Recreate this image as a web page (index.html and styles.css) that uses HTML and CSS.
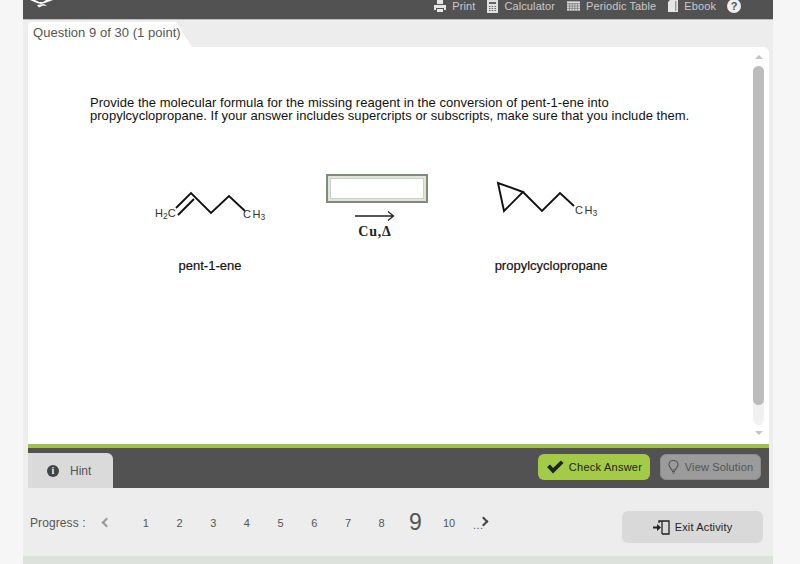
FILE: index.html
```html
<!DOCTYPE html>
<html>
  <head>
    <meta name="viewport" content="width=device-width, initial-scale=1.0">
    <link rel="stylesheet" href="styles.css">
  </head>
  <body>
    <div class="page">
      <div class="topbar">
        <svg class="logo" width="24" height="8" viewBox="0 0 24 8">
          <path d="M0 0 L7 3 L11 4 L15 3 L23 0 L16 0 L13 2 L9 2 L5 0 Z M7 5 L14 4 L17 6 L13 5.500 L9 7.500 Z" fill="#fff"/>
        </svg>
        <div class="tools">
          <a class="tool">
            <svg width="12" height="12" viewBox="0 0 12 12"><path d="M3 0h6v4H3z M0 5h12v5h-2V8H2v2H0z M3 9h6v3H3z" fill="#e6e6e6"/></svg>
            Print
          </a>
          <a class="tool">
            <svg width="11" height="13" viewBox="0 0 11 13"><path d="M0 0h11v13H0z" fill="#e0e0e0"/><path d="M2 2h7v2H2z M2 6h1.500v1H2z M4.700 6h1.500v1H4.700z M7.500 6H9v1H7.500z M2 8h1.500v1H2z M4.700 8h1.500v1H4.700z M7.500 8H9v1H7.500z M2 10h1.500v1H2z M4.700 10h1.500v1H4.700z M7.500 10H9v1H7.500z" fill="#666"/></svg>
            Calculator
          </a>
          <a class="tool">
            <svg width="13" height="10" viewBox="0 0 14 10"><path d="M0 0h14v10H0z" fill="#ddd"/><path d="M0 2.500h14 M0 5h14 M0 7.500h14 M2.800 2v8 M5.600 2v8 M8.400 2v8 M11.200 2v8" stroke="#666" stroke-width="0.700"/></svg>
            Periodic Table
          </a>
          <a class="tool tool-ebook">
            <svg width="10" height="12" viewBox="0 0 10 12"><path d="M0 2 L2 0 H10 V12 H0 Z" fill="#e6e6e6"/><path d="M7.800 1v10" stroke="#777"/></svg>
            Ebook
          </a>
          <span class="help">?</span>
        </div>
      </div>

      <div class="tabrow">
        <div class="tab">Question 9 of 30 (1 point)</div>
      </div>

      <div class="card">
        <div class="content">
          <p class="prompt">Provide the molecular formula for the missing reagent in the conversion of pent-1-ene into propylcyclopropane. If your answer includes supercripts or subscripts, make sure that you include them.</p>
          <div class="scheme">
            <div class="molecule mol-left">
              <svg width="120" height="60" viewBox="0 0 120 60">
                <path d="M26 37 L41 22 L61 42 L79 25 L95 40" class="bond"/>
                <path d="M28 44 L44 28" class="bond"/>
                <text x="5" y="46" class="atom">H<tspan class="sub" dy="2">2</tspan><tspan dy="-2">C</tspan></text>
                <text x="93" y="47" class="atom atom-gap">C H<tspan class="sub" dy="2">3</tspan></text>
              </svg>
              <div class="caption">pent-1-ene</div>
            </div>
            <div class="reaction">
              <div class="answer-box"><input class="answer" type="text"></div>
              <svg class="arrow" width="40" height="12" viewBox="0 0 40 12">
                <path d="M0 6 H38 M33 1.500 L38.500 6 L33 10.500" fill="none" stroke="#222" stroke-width="1.300"/>
              </svg>
              <div class="conditions">Cu,&Delta;</div>
            </div>
            <div class="molecule mol-right">
              <svg width="120" height="60" viewBox="0 0 120 60">
                <path d="M18 12 L24 40 L43 21 Z M43 21 L62 40 L80 22 L94 35" class="bond"/>
                <text x="95" y="43" class="atom atom-gap">C H<tspan class="sub" dy="2">3</tspan></text>
              </svg>
              <div class="caption caption-wide">propylcyclopropane</div>
            </div>
          </div>
        </div>
        <div class="scrollbar">
          <span class="scroll-up"></span>
          <div class="scroll-track"><div class="scroll-thumb"></div></div>
          <span class="scroll-down"></span>
        </div>
      </div>

      <div class="actionbar">
        <div class="hint">
          <span class="hint-icon">i</span>
          Hint
        </div>
        <div class="actions">
          <button class="btn btn-check">
            <svg width="18" height="14" viewBox="0 0 18 14"><path d="M1 7 L4 4.500 L7 8 L15 0.500 L17.500 3 L7 13.500 Z" fill="#222"/></svg>
            Check Answer
          </button>
          <button class="btn btn-solution">
            <svg width="11" height="14" viewBox="0 0 11 14"><path d="M3.500 10 C3 7.500 1 7 1 4.700 A4.500 4.200 0 0 1 10 4.700 C10 7 8 7.500 7.500 10 Z M4 11.500h3 M4.500 13h2" fill="none" stroke="#555" stroke-width="1.200"/></svg>
            View Solution
          </button>
        </div>
      </div>

      <div class="progress">
        <span class="progress-label">Progress :</span>
        <span class="chev chev-prev"></span>
        <ol class="steps">
          <li>1</li>
          <li>2</li>
          <li>3</li>
          <li>4</li>
          <li>5</li>
          <li>6</li>
          <li>7</li>
          <li>8</li>
          <li class="current">9</li>
          <li>10</li>
        </ol>
        <span class="more">...</span>
        <span class="chev chev-next"></span>
        <button class="exit">
          <svg width="18" height="15" viewBox="0 0 18 15"><path d="M6 3V1h10v13H9 M9 1v13" fill="none" stroke="#222" stroke-width="1.300"/><path d="M0 6.500h4V4l4 3.500L4 11V8.500H0z" fill="#222"/></svg>
          Exit Activity
        </button>
      </div>

      <div class="footstrip"></div>
    </div>
  </body>
</html>
```

FILE: styles.css
```css
html, body {
  margin: 0;
  height: 564px;
  overflow: hidden;
}

body {
  background-color: #f6f6f6;
  font-family: "Liberation Sans", Arial, sans-serif;
  color: #444;
}

.page {
  width: 750px;
  height: 564px;
  margin-left: 23px;
  background-color: #ededed;
  display: flex;
  flex-direction: column;
}

/* Top bar */
.topbar {
  height: 19px;
  flex: none;
  background-color: #525252;
  border-bottom: 1px solid #bdbdbd;
  display: flex;
  justify-content: space-between;
  overflow: hidden;
}

.logo {
  margin-left: 7px;
}

.tools {
  display: flex;
  align-items: flex-start;
  gap: 12px;
  padding-right: 32px;
}

.tool {
  height: 12px;
  display: flex;
  align-items: center;
  gap: 6px;
  color: #c9c9c9;
  font-size: 11px;
  line-height: 11px;
  letter-spacing: 0.100px;
}

.help {
  width: 14px;
  height: 14px;
  margin-left: -1px;
  margin-top: -1px;
  border-radius: 50%;
  background-color: #eee;
  color: #525252;
  font-size: 11px;
  font-weight: bold;
  line-height: 14px;
  text-align: center;
}

/* Question tab */
.tabrow {
  height: 27px;
  flex: none;
  padding-left: 5px;
  display: flex;
  align-items: flex-end;
}

.tab {
  height: 25px;
  width: 159px;
  padding-left: 5px;
  background-color: #fff;
  border-radius: 4px 0 0 0;
  clip-path: polygon(0 0, 148px 0, 100% 100%, 0 100%);
  font-size: 13px;
  line-height: 22px;
  letter-spacing: 0.040px;
  color: #555;
}

/* Question card */
.card {
  height: 397px;
  flex: none;
  margin: 0 4px 0 5px;
  background-color: #fff;
  border-radius: 0 6px 0 0;
  display: flex;
}

.content {
  flex: 1;
  color: #111;
}

.prompt {
  margin: 49px 0 0 62px;
  width: 610px;
  font-size: 13px;
  line-height: 13px;
  letter-spacing: 0.030px;
}

.scheme {
  display: flex;
  margin-top: 52px;
}

.molecule {
  width: 120px;
  margin-top: -3px;
  display: flex;
  flex-direction: column;
}

.molecule svg {
  height: 60px;
}

.mol-left {
  margin-left: 122px;
}

.mol-right {
  margin-left: 52px;
}

.bond {
  fill: none;
  stroke: #111;
  stroke-width: 1.900;
}

.atom {
  font-family: "Liberation Sans", Arial, sans-serif;
  font-size: 11px;
  fill: #333;
}

.atom-gap {
  word-spacing: -1.500px;
}

.sub {
  font-size: 8.500px;
}

.caption {
  margin-top: 27px;
  font-size: 13px;
  line-height: 15px;
  text-align: center;
  -webkit-text-stroke: 0.200px #111;
}

.caption-wide {
  margin-left: -6px;
  margin-right: -28px;
}

.reaction {
  width: 102px;
  margin-left: 56px;
  display: flex;
  flex-direction: column;
  align-items: center;
}

.answer-box {
  width: 102px;
  height: 29px;
  box-sizing: border-box;
  border: 2px solid #7d8a7d;
  background-color: #e6e4d2;
  padding: 2px;
}

.answer {
  display: block;
  width: 100%;
  height: 100%;
  box-sizing: border-box;
  border: 1px solid #c4d0dc;
  background-color: #fff;
  padding: 0;
}

.arrow {
  margin: 7px 5px 0 0;
}

.conditions {
  margin: 2px 4px 0 0;
  font-family: "Liberation Serif", "Times New Roman", serif;
  font-size: 14px;
  font-weight: bold;
  line-height: 16px;
  letter-spacing: 0.800px;
  color: #222;
}

/* Scrollbar */
.scrollbar {
  width: 11px;
  flex: none;
  margin-right: 5px;
  display: flex;
  flex-direction: column;
  align-items: center;
}

.scroll-up,
.scroll-down {
  width: 0;
  height: 0;
  border-left: 4px solid transparent;
  border-right: 4px solid transparent;
}

.scroll-up {
  margin-top: 8px;
  border-bottom: 4px solid #c4c4c4;
}

.scroll-down {
  margin-top: 6px;
  border-top: 4px solid #c4c4c4;
}

.scroll-track {
  width: 11px;
  height: 359px;
  margin-top: 7px;
  background-color: #f1f1f1;
  border-radius: 6px;
}

.scroll-thumb {
  height: 339px;
  background-color: #bcbcbc;
  border-radius: 6px;
}

/* Action bar */
.actionbar {
  height: 40px;
  flex: none;
  margin: 0 4px 0 5px;
  background-color: #525252;
  border-top: 4px solid #a0bf4c;
  display: flex;
  justify-content: space-between;
}

.hint {
  width: 85px;
  height: 35px;
  margin-top: 5px;
  box-sizing: border-box;
  padding-left: 19px;
  background-color: #dadada;
  border-radius: 0 6px 0 0;
  display: flex;
  align-items: center;
  gap: 11px;
  font-size: 12px;
  color: #555;
}

.hint-icon {
  width: 12px;
  height: 12px;
  border-radius: 50%;
  background-color: #444;
  color: #eee;
  font-family: "Liberation Serif", serif;
  font-size: 10px;
  font-weight: bold;
  line-height: 12px;
  text-align: center;
}

.actions {
  display: flex;
  align-items: flex-start;
  gap: 10px;
  padding: 6px 8px 0 0;
}

.btn {
  height: 26px;
  border: none;
  border-radius: 6px;
  padding: 0;
  display: flex;
  align-items: center;
  justify-content: center;
  font-family: inherit;
  font-size: 11px;
}

.btn-check {
  width: 112px;
  gap: 5px;
  background-color: #a3cb45;
  color: #222;
  letter-spacing: 0.250px;
}

.btn-solution {
  width: 101px;
  gap: 6px;
  background-color: #9b9b9b;
  color: #555;
  border: 1px solid #8c8c8c;
  letter-spacing: 0.150px;
}

/* Progress row */
.progress {
  height: 68px;
  flex: none;
  box-sizing: border-box;
  padding: 2px 10px 0 7px;
  display: flex;
  align-items: center;
  font-size: 12px;
  color: #555;
}

.progress-label {
  width: 71px;
  flex: none;
  letter-spacing: 0.100px;
}

.chev {
  width: 5px;
  height: 5px;
  flex: none;
  border-left: 2px solid #999;
  border-bottom: 2px solid #999;
  transform: rotate(45deg);
}

.chev-prev {
  margin: -2px 0 0 2px;
}

.chev-next {
  margin: -4px 0 0 -6px;
  border-color: #444;
  transform: rotate(225deg);
}

.steps {
  list-style: none;
  display: flex;
  align-items: center;
  margin: 0 0 0 19px;
  padding: 0;
}

.steps li {
  width: 33.700px;
  text-align: center;
  font-size: 11px;
}

.steps li.current {
  margin-top: -2px;
  font-size: 23px;
  line-height: 23px;
}

.more {
  margin: 4px 0 0 7px;
  width: 13px;
  font-size: 11px;
  letter-spacing: 0.500px;
}

.exit {
  width: 141px;
  height: 32px;
  margin: 8px 0 0 auto;
  border: none;
  border-radius: 6px;
  background-color: #d9d9d9;
  display: flex;
  align-items: center;
  justify-content: center;
  gap: 4px;
  font-family: inherit;
  font-size: 11px;
  letter-spacing: 0.150px;
  color: #222;
}

.footstrip {
  flex: 1;
  background-color: #dde3dc;
}
```
